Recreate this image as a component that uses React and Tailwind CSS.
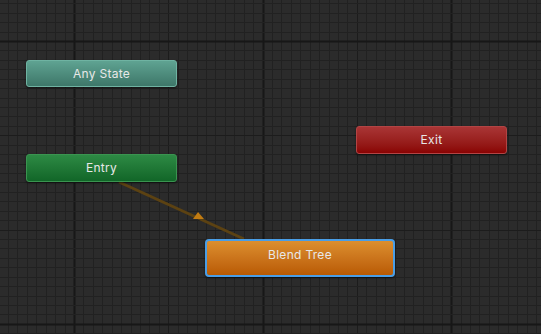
import React from "react";

const STEP = 9.43;

function lineStyle(i, strong) {
  if (strong.includes(i)) return { stroke: "#171717", w: 2 };
  if (i % 10 === 0) return { stroke: "#1c1c1c", w: 1 };
  return { stroke: "#212121", w: 1 };
}

function Grid() {
  const xs = [];
  for (let i = -8; 74 + i * STEP < 541; i++) xs.push(i);
  const ys = [];
  for (let i = -5; 41 + i * STEP < 334; i++) ys.push(i);
  return (
    <svg className="absolute inset-0" width="541" height="334">
      <rect width="541" height="334" fill="#2b2b2b" />
      {xs.map((i) => {
        const s = lineStyle(i, [0, 20, 40]);
        const x = Math.round(74 + i * STEP) + 0.5;
        return <line key={"x" + i} x1={x} x2={x} y1="0" y2="334" stroke={s.stroke} strokeWidth={s.w} />;
      })}
      {ys.map((i) => {
        const s = lineStyle(i, [0, 30]);
        const y = Math.round(41 + i * STEP) + 0.5;
        return <line key={"y" + i} y1={y} y2={y} x1="0" x2="541" stroke={s.stroke} strokeWidth={s.w} />;
      })}
    </svg>
  );
}

function Node({ label, className }) {
  return (
    <div
      className={
        "absolute flex justify-center rounded-[3px] text-[12px] tracking-[0.3px] text-[#e8e8e8] shadow-[0_1px_2px_rgba(0,0,0,0.6)] " +
        className
      }
    >
      {label}
    </div>
  );
}

export default function App() {
  return (
    <div className="relative h-[334px] w-[541px] overflow-hidden bg-[#2b2b2b] font-['Inter',sans-serif]">
      <Grid />

      <svg className="absolute inset-0" width="541" height="334">
        <line x1="119" y1="182" x2="244" y2="239" stroke="#5c4212" strokeWidth="3" />
        <polygon points="198,212 193,219 204,219" fill="#c27c12" />
      </svg>

      <Node
        label="Any State"
        className="left-[26px] top-[60px] h-[27px] w-[151px] items-center border border-[#6fb3a2] bg-gradient-to-b from-[#5fa392] to-[#3e7769]"
      />
      <Node
        label="Entry"
        className="left-[26px] top-[154px] h-[28px] w-[151px] items-center border border-[#3a9450] bg-gradient-to-b from-[#2d8a44] to-[#116628]"
      />
      <Node
        label="Exit"
        className="left-[356px] top-[126px] h-[28px] w-[151px] items-center border border-[#b24444] bg-gradient-to-b from-[#a93535] to-[#8a0202]"
      />
      <Node
        label="Blend Tree"
        className="left-[205px] top-[239px] h-[38px] w-[190px] items-start pt-[5px] rounded-[4px] border-2 border-[#4a9ee6] bg-gradient-to-b from-[#dc8f2e] to-[#b95a02] shadow-[0_0_4px_rgba(60,150,230,0.7)]"
      />
    </div>
  );
}
